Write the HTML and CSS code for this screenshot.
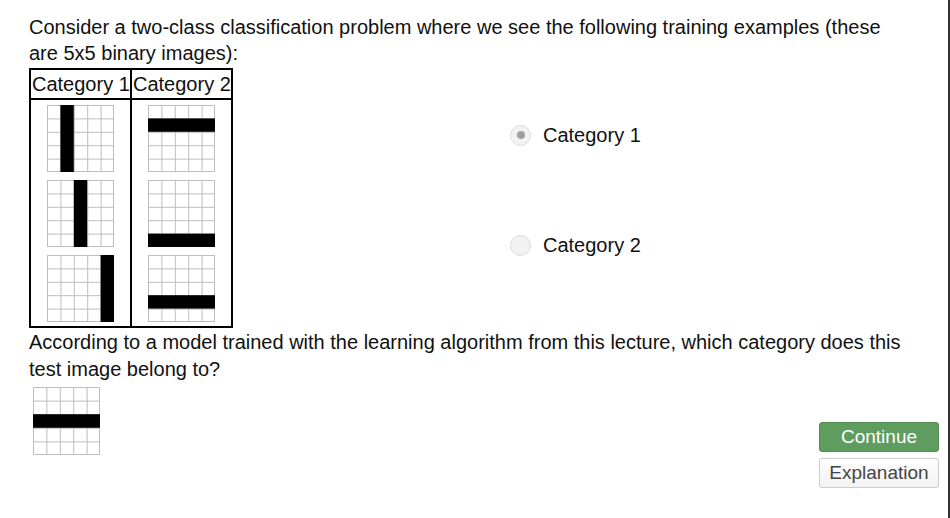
FILE: index.html
```html
<!DOCTYPE html>
<html>
<head>
<meta charset="utf-8">
<link rel="stylesheet" href="styles.css">
</head>
<body>
<div class="page">
  <div class="content">
    <p class="q1">Consider a two-class classification problem where we see the following training examples (these are 5x5 binary images):</p>
    <div class="mid">
      <table class="train">
        <thead>
          <tr><th>Category 1</th><th>Category 2</th></tr>
        </thead>
        <tbody>
          <tr>
            <td>
              <div class="stack">
                <svg class="grid" width="67" height="67" viewBox="0 0 67 67"><g stroke="#bdbdbd" stroke-width="1" fill="none"><path d="M0.5 0V67M13.9 0V67M27.3 0V67M40.7 0V67M54.1 0V67M66.5 0V67M0 0.5H67M0 13.9H67M0 27.3H67M0 40.7H67M0 54.1H67M0 66.5H67"/></g><rect x="13.4" y="0" width="13.4" height="67" fill="#000"/></svg>
                <svg class="grid" width="67" height="67" viewBox="0 0 67 67"><g stroke="#bdbdbd" stroke-width="1" fill="none"><path d="M0.5 0V67M13.9 0V67M27.3 0V67M40.7 0V67M54.1 0V67M66.5 0V67M0 0.5H67M0 13.9H67M0 27.3H67M0 40.7H67M0 54.1H67M0 66.5H67"/></g><rect x="26.8" y="0" width="13.4" height="67" fill="#000"/></svg>
                <svg class="grid" width="67" height="67" viewBox="0 0 67 67"><g stroke="#bdbdbd" stroke-width="1" fill="none"><path d="M0.5 0V67M13.9 0V67M27.3 0V67M40.7 0V67M54.1 0V67M66.5 0V67M0 0.5H67M0 13.9H67M0 27.3H67M0 40.7H67M0 54.1H67M0 66.5H67"/></g><rect x="53.6" y="0" width="13.4" height="67" fill="#000"/></svg>
              </div>
            </td>
            <td>
              <div class="stack">
                <svg class="grid" width="67" height="67" viewBox="0 0 67 67"><g stroke="#bdbdbd" stroke-width="1" fill="none"><path d="M0.5 0V67M13.9 0V67M27.3 0V67M40.7 0V67M54.1 0V67M66.5 0V67M0 0.5H67M0 13.9H67M0 27.3H67M0 40.7H67M0 54.1H67M0 66.5H67"/></g><rect x="0" y="13.4" width="67" height="13.4" fill="#000"/></svg>
                <svg class="grid" width="67" height="67" viewBox="0 0 67 67"><g stroke="#bdbdbd" stroke-width="1" fill="none"><path d="M0.5 0V67M13.9 0V67M27.3 0V67M40.7 0V67M54.1 0V67M66.5 0V67M0 0.5H67M0 13.9H67M0 27.3H67M0 40.7H67M0 54.1H67M0 66.5H67"/></g><rect x="0" y="53.6" width="67" height="13.4" fill="#000"/></svg>
                <svg class="grid" width="67" height="67" viewBox="0 0 67 67"><g stroke="#bdbdbd" stroke-width="1" fill="none"><path d="M0.5 0V67M13.9 0V67M27.3 0V67M40.7 0V67M54.1 0V67M66.5 0V67M0 0.5H67M0 13.9H67M0 27.3H67M0 40.7H67M0 54.1H67M0 66.5H67"/></g><rect x="0" y="40.2" width="67" height="13.4" fill="#000"/></svg>
              </div>
            </td>
          </tr>
        </tbody>
      </table>
      <div class="options">
        <label class="opt"><span class="radio"><span class="dot"></span></span><span class="lbl">Category 1</span></label>
        <label class="opt"><span class="radio"></span><span class="lbl">Category 2</span></label>
      </div>
    </div>
    <p class="q2">According to a model trained with the learning algorithm from this lecture, which category does this test image belong to?</p>
    <div class="bottom">
      <svg class="grid" width="67" height="68" viewBox="0 0 67 68"><g stroke="#bdbdbd" stroke-width="1" fill="none"><path d="M0.5 0V68M13.9 0V68M27.3 0V68M40.7 0V68M54.1 0V68M66.5 0V68M0 0.5H67M0 14.1H67M0 27.7H67M0 41.3H67M0 54.9H67M0 67.5H67"/></g><rect x="0" y="27.2" width="67" height="13.6" fill="#000"/></svg>
      <div class="buttons">
        <button class="btn continue">Continue</button>
        <button class="btn explain">Explanation</button>
      </div>
    </div>
  </div>
</div>
</body>
</html>
```

FILE: styles.css
```css
html, body {
  margin: 0;
  padding: 0;
  background: #fff;
}
body {
  font-family: "Liberation Sans", Arial, sans-serif;
  color: #111;
}
.page {
  width: 948px;
  height: 518px;
  border-right: 2px solid #333;
  overflow: hidden;
}
.content {
  padding: 14px 9px 0 29px;
}
.q1 {
  margin: 0;
  font-size: 20px;
  line-height: 26px;
  width: 878px;
}
.mid {
  display: flex;
  align-items: flex-start;
  margin-top: 2px;
}
.train {
  border-collapse: collapse;
  border: 2px solid #000;
}
.train th {
  border: 2px solid #000;
  font-weight: normal;
  font-size: 20px;
  line-height: 28px;
  padding: 0 0 0 1px;
  width: 98px;
  text-align: left;
  white-space: nowrap;
}
.train td {
  border: 2px solid #000;
  padding: 5px 0 4px;
  vertical-align: top;
}
.stack {
  display: flex;
  flex-direction: column;
  align-items: center;
  gap: 8px;
}
.grid {
  display: block;
}
.options {
  margin-left: 277px;
  margin-top: 57px;
  display: flex;
  flex-direction: column;
  gap: 90px;
}
.opt {
  display: flex;
  align-items: center;
  height: 20px;
  font-size: 20px;
}
.radio {
  width: 19px;
  height: 19px;
  border: 1px solid #dcdcdc;
  border-radius: 50%;
  background: #f2f2f2;
  display: flex;
  align-items: center;
  justify-content: center;
  margin-right: 12px;
}
.dot {
  width: 8px;
  height: 8px;
  border-radius: 50%;
  background: #a0a0a0;
}
.lbl {
  line-height: 20px;
}
.q2 {
  margin: 1px 0 0;
  font-size: 20px;
  line-height: 27px;
  width: 878px;
}
.bottom {
  display: flex;
  align-items: flex-start;
  justify-content: space-between;
  margin-top: 4px;
  padding-left: 4px;
}
.buttons {
  display: flex;
  flex-direction: column;
  gap: 6px;
  margin-top: 35px;
}
.btn {
  width: 120px;
  height: 30px;
  border-radius: 3px;
  font-family: "Liberation Sans", Arial, sans-serif;
  padding: 0;
  cursor: pointer;
}
.continue {
  background: #5f9c5f;
  border: 1px solid #528f52;
  color: #fff;
  font-size: 19px;
}
.explain {
  background: linear-gradient(#ffffff, #f2f2f2);
  border: 1px solid #cccccc;
  color: #444;
  font-size: 19px;
}
```
